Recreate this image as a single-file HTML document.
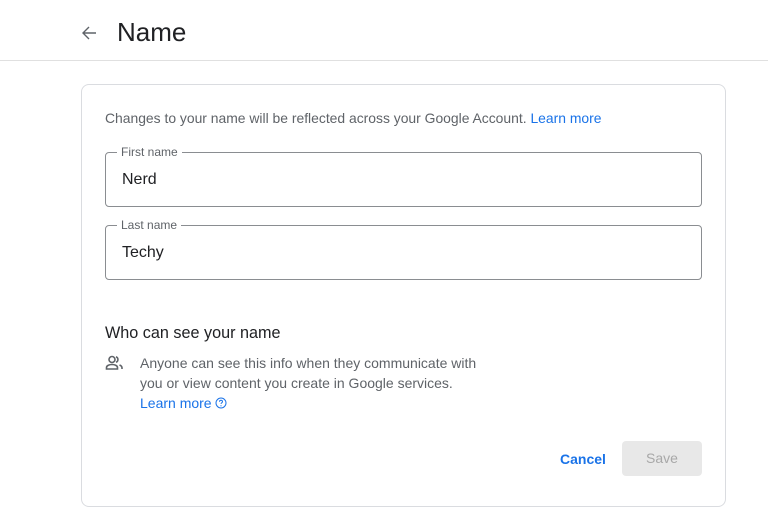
<!DOCTYPE html>
<html><head><style>
body{margin:0;width:768px;height:531px;background:#fff;font-family:"Liberation Sans",sans-serif;position:relative;overflow:hidden;color:#202124}
.hdr{position:absolute;left:0;top:0;width:768px;height:60px;border-bottom:1px solid #e0e0e0}
.title{position:absolute;left:117px;top:17px;font-size:26px;color:#202124}
.card{position:absolute;left:81px;top:84px;width:643px;height:421px;border:1px solid #dadce0;border-radius:8px}
.abs{position:absolute}
.field{position:absolute;left:105px;width:595px;height:53px;border:1px solid #8a8d91;border-radius:4px}
.lab{position:absolute;left:11px;top:-8px;background:#fff;padding:0 4px;font-size:12px;color:#5f6368}
.val{position:absolute;left:16px;top:18px;font-size:16px}
.blue{color:#1a73e8}
</style></head><body>
<div class="hdr">
<svg class="abs" style="left:81px;top:25px" width="16" height="16" viewBox="0 0 16 16"><path d="M15 8H2M8 2L2 8l6 6" stroke="#5f6368" stroke-width="1.4" fill="none"/></svg>
<div class="title">Name</div>
</div>
<div class="card"></div>
<div class="abs" style="left:105px;top:110px;font-size:13.9px;color:#5f6368">Changes to your name will be reflected across your Google Account. <span class="blue">Learn more</span></div>
<div class="field" style="top:152px"><div class="lab">First name</div><div class="val">Nerd</div></div>
<div class="field" style="top:225px"><div class="lab">Last name</div><div class="val">Techy</div></div>
<div class="abs" style="left:105px;top:324px;font-size:16.2px">Who can see your name</div>
<svg class="abs" style="left:105px;top:355px" width="20" height="16" viewBox="0 0 20 16"><circle cx="7" cy="4.5" r="3" stroke="#5f6368" stroke-width="1.6" fill="none"/><path d="M1.5 14v-1.5c0-2 3-3 5.5-3s5.5 1 5.5 3V14z" stroke="#5f6368" stroke-width="1.6" fill="none"/><path d="M11 1.7a3 3 0 010 5.6M14.5 10c1.5.6 2.5 1.5 2.5 2.8V14" stroke="#5f6368" stroke-width="1.6" fill="none"/></svg>
<div class="abs" style="left:140px;top:353px;font-size:14px;line-height:20px;color:#5f6368">Anyone can see this info when they communicate with<br>you or view content you create in Google services.<br><span class="blue">Learn more</span> <svg width="12" height="12" viewBox="0 0 12 12" style="vertical-align:-1px"><circle cx="6" cy="6" r="5" stroke="#1a73e8" fill="none"/><path d="M4.5 4.7a1.5 1.5 0 113 0c0 1-1.5 1.2-1.5 2.2" stroke="#1a73e8" fill="none"/><circle cx="6" cy="8.8" r=".6" fill="#1a73e8"/></svg></div>
<div class="abs blue" style="left:560px;top:451px;font-size:14px;font-weight:bold">Cancel</div>
<div class="abs" style="left:622px;top:441px;width:80px;height:35px;background:#e8e8e8;border-radius:4px;color:#a8a8a8;font-size:14px;text-align:center;line-height:35px">Save</div>
</body></html>
